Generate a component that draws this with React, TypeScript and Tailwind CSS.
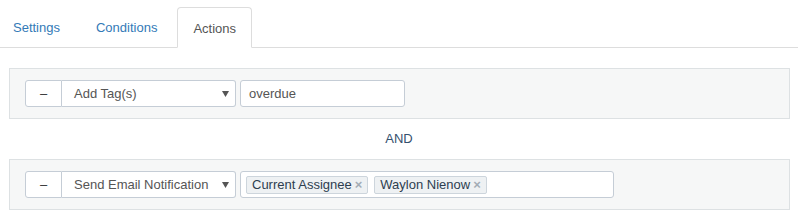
import React from 'react';

const tabs = ['Settings', 'Conditions', 'Actions'];

const Caret = () => (
  <svg width="7" height="6" viewBox="0 0 7 6" className="shrink-0">
    <path d="M0 0 L7 0 L3.5 6 Z" fill="#555" />
  </svg>
);

const Chip = ({ label }: { label: string }) => (
  <span className="flex items-center h-[18px] pl-[5px] pr-[5px] bg-[#eef1f3] border border-[#cdd5dc] rounded-[2px] text-[13px] text-[#2d3e50] leading-none">
    {label}
    <span className="ml-[3px] text-[13px] font-bold text-[#a3acb5]">×</span>
  </span>
);

const ActionRow = ({ action, children }: { action: string; children: React.ReactNode }) => (
  <div className="ml-[9px] mr-[8px] border border-[#dde1e3] bg-[#f6f7f7] px-[15px] py-[11px] flex items-center gap-[4px]">
    <div className="flex h-[27px]">
      <button className="w-[37px] h-full border border-[#c5cdd6] rounded-l-[3px] bg-white text-[#333] text-[13px] flex items-center justify-center">
        –
      </button>
      <div className="w-[174px] h-full border border-l-0 border-[#c5cdd6] rounded-r-[3px] bg-white flex items-center justify-between pl-[12px] pr-[6px] text-[13px] text-[#555]">
        <span>{action}</span>
        <Caret />
      </div>
    </div>
    {children}
  </div>
);

export default function App() {
  return (
    <div className="w-[798px] h-[217px] bg-white font-['Liberation_Sans',Arial,sans-serif] text-[13px]">
      {/* tabs */}
      <div className="pt-[7px] border-b border-[#ddd] flex h-[48px] pl-0">
        {tabs.map((t) =>
          t === 'Actions' ? (
            <div
              key={t}
              className="ml-[5px] -mb-px h-[41px] pt-[2px] px-[15px] flex items-center border border-[#ddd] border-b-white rounded-t-[4px] bg-white text-[#555]"
            >
              {t}
            </div>
          ) : (
            <div key={t} className={`h-[40px] pt-[2px] flex items-center text-[#337ab7] ${t === 'Settings' ? 'pl-[13px] pr-[17px]' : 'ml-[4px] px-[15px]'}`}>
              {t}
            </div>
          )
        )}
      </div>

      <div className="mt-[20px]">
        <ActionRow action="Add Tag(s)">
          <div className="w-[165px] h-[27px] border border-[#c5cdd6] rounded-[3px] bg-white flex items-center px-[8px] text-[#555]">
            overdue
          </div>
        </ActionRow>

        <div className="h-[40px] flex items-center justify-center text-[#34506e] text-[13px]">AND</div>

        <ActionRow action="Send Email Notification">
          <div className="w-[374px] h-[27px] border border-[#c5cdd6] rounded-[3px] bg-white flex items-center gap-[6px] px-[5px]">
            <Chip label="Current Assignee" />
            <Chip label="Waylon Nienow" />
          </div>
        </ActionRow>
      </div>
    </div>
  );
}
